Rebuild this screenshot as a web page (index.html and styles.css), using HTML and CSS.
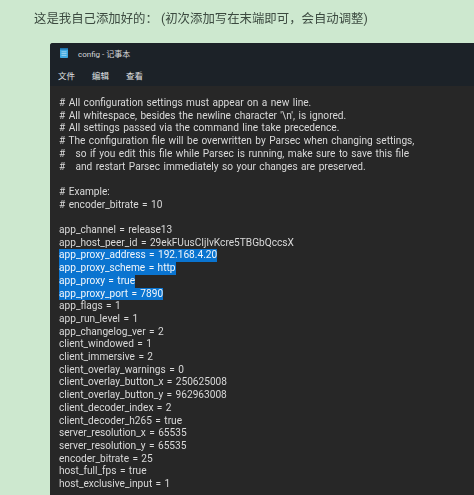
FILE: index.html
```html
<!DOCTYPE html>
<html>
<head>
    <title>config</title>
    <link rel="stylesheet" href="styles.css">
</head>
<body>
    <p class="intro">这是我自己添加好的： (初次添加写在末端即可，会自动调整)</p>

    <div class="window">
        <div class="title-bar">
            <svg class="app-icon" width="8" height="10" viewBox="0 0 8 10">
                <rect width="8" height="10" rx="0.8" fill="#3fa9e0"/>
                <rect width="8" height="1.6" fill="#1f6fa8"/>
                <path d="M1.5 3.8h5M1.5 5.6h5M1.5 7.4h5" stroke="#bfe4f7" stroke-width="0.7"/>
            </svg>
            <span>config - 记事本</span>
        </div>
        <div class="menu-bar">
            <span>文件</span>
            <span>编辑</span>
            <span>查看</span>
        </div>
        <div class="editor">
            <div># All configuration settings must appear on a new line.</div>
            <div># All whitespace, besides the newline character '\n', is ignored.</div>
            <div># All settings passed via the command line take precedence.</div>
            <div># The configuration file will be overwritten by Parsec when changing settings,</div>
            <div>#&nbsp;&nbsp;&nbsp;so if you edit this file while Parsec is running, make sure to save this file</div>
            <div>#&nbsp;&nbsp;&nbsp;and restart Parsec immediately so your changes are preserved.</div>
            <div>&nbsp;</div>
            <div># Example:</div>
            <div># encoder_bitrate = 10</div>
            <div>&nbsp;</div>
            <div>app_channel = release13</div>
            <div>app_host_peer_id = 29ekFUusCIjlvKcre5TBGbQccsX</div>
            <div><span class="selected">app_proxy_address = 192.168.4.20</span></div>
            <div><span class="selected">app_proxy_scheme = http</span></div>
            <div><span class="selected">app_proxy = true</span></div>
            <div><span class="selected">app_proxy_port = 7890</span></div>
            <div>app_flags = 1</div>
            <div>app_run_level = 1</div>
            <div>app_changelog_ver = 2</div>
            <div>client_windowed = 1</div>
            <div>client_immersive = 2</div>
            <div>client_overlay_warnings = 0</div>
            <div>client_overlay_button_x = 250625008</div>
            <div>client_overlay_button_y = 962963008</div>
            <div>client_decoder_index = 2</div>
            <div>client_decoder_h265 = true</div>
            <div>server_resolution_x = 65535</div>
            <div>server_resolution_y = 65535</div>
            <div>encoder_bitrate = 25</div>
            <div>host_full_fps = true</div>
            <div>host_exclusive_input = 1</div>
        </div>
    </div>
</body>
</html>
```

FILE: styles.css
```css
html, body {
    height: 100%;
}
body {
    margin: 0;
    background: #cde8cf;
    overflow: hidden;
    font-family: Roboto, "Noto Sans CJK SC", sans-serif;
}
.intro {
    margin: 0;
    padding: 10px 0 0 34px;
    height: 33px;
    font-size: 12.4px;
    line-height: 18px;
    color: #3c4a40;
    filter: blur(0.3px);
}
.window {
    margin-left: 50px;
    height: 452px;
    border-radius: 3px 0 0 0;
    background: #272727;
    overflow: hidden;
}
.title-bar {
    display: flex;
    align-items: center;
    gap: 10px;
    height: 20px;
    padding-left: 10px;
    background: #1c2228;
    color: #d6d8da;
    font-size: 8px;
}
.menu-bar {
    display: flex;
    gap: 17px;
    height: 23px;
    padding-left: 8px;
    align-items: center;
    background: #1c2228;
    color: #e0e2e4;
    font-size: 8.5px;
}
.editor {
    padding: 11px 0 0 9px;
    color: #d9d9d9;
    font-size: 10.15px;
    word-spacing: 0.9px;
    line-height: 12.7px;
    white-space: nowrap;
    filter: blur(0.3px);
}
.selected {
    display: inline-block;
    background: #0a74d0;
    color: #f2f6fa;
}
```
